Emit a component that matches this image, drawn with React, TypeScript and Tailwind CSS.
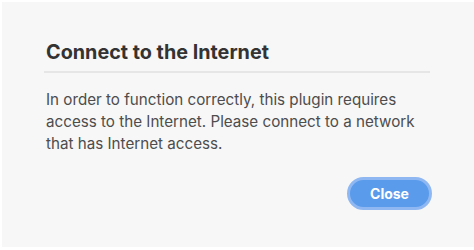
export default function App() {
  return (
    <div className="h-[250px] w-[474px] bg-white pl-[2px] pt-[2px] pb-[3px]">
      <div
        className="flex h-full flex-col bg-[#f7f7f7] pl-[42px] pr-[42px]"
        style={{ fontFamily: "Inter, 'Liberation Sans', sans-serif" }}
      >
        <h1 className="mt-[36px] pl-[2px] text-[19.8px] leading-[28px] font-bold text-[#333333]">
          Connect to the Internet
        </h1>
        <div className="mt-[5px] mr-[2px] h-[2px] bg-[#e6e6e6]" />
        <p className="mt-[16px] pl-[2px] text-[15.2px] leading-[22px] text-[#4d4d4d]">
          In order to function correctly, this plugin requires access to the Internet. Please connect to a network that has Internet access.
        </p>
        <div className="mt-[22px] flex justify-end">
          <button className="h-[33px] w-[85px] rounded-full border-[3px] border-[#8fb8f2] bg-[#5a9beb] text-[14px] font-bold text-white">
            Close
          </button>
        </div>
      </div>
    </div>
  );
}
